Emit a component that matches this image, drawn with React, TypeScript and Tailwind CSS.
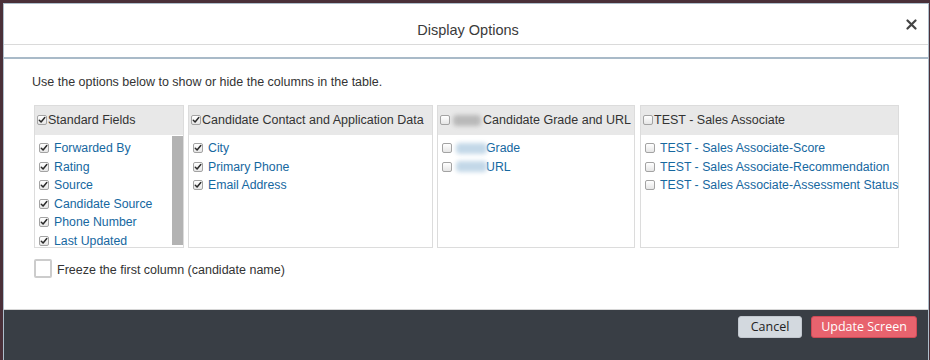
import React from "react";

const font = { fontFamily: '"Liberation Sans", Arial, sans-serif' };

function Box({ checked, size = 10 }: { checked?: boolean; size?: number }) {
  return (
    <span
      className="inline-flex shrink-0 items-center justify-center rounded-[2px] border border-[#a3a3a3] bg-gradient-to-b from-white to-[#e6e6e6]"
      style={{ width: size, height: size }}
    >
      {checked && (
        <svg width="8" height="8" viewBox="0 0 8 8">
          <path d="M1.3 4.2 L3.1 6 L6.8 1.6" fill="none" stroke="#2a2a2a" strokeWidth="1.5" strokeLinecap="round" strokeLinejoin="round" />
        </svg>
      )}
    </span>
  );
}

function Item({ label, checked, blurred }: { label: string; checked?: boolean; blurred?: boolean }) {
  return (
    <div className="flex items-center h-[18.5px] text-[12.3px]">
      <Box checked={checked} />
      {blurred ? (
        <span className="flex items-center ml-[4px]">
          <span className="w-[31px] h-[11px] bg-[#c3d8e8] blur-[2px] rounded-sm" />
          <span className="text-[#16689f] -ml-[1px]">{label}</span>
        </span>
      ) : (
        <span className="ml-[5px] text-[#16689f] whitespace-nowrap">{label}</span>
      )}
    </div>
  );
}

function Panel({
  width,
  title,
  checked,
  items,
  scroll,
  blurHeader,
  blurredItems,
}: {
  width: string;
  title: string;
  checked?: boolean;
  items: string[];
  scroll?: boolean;
  blurHeader?: boolean;
  blurredItems?: boolean;
}) {
  return (
    <div className={`${width} h-[143px] border border-[#dcdcdc] flex flex-col bg-white`}>
      <div className="h-[29px] bg-[#e8e8e8] flex items-start pt-[6px] pl-[2px] text-[#333]">
        <div className="flex items-center h-[16px]">
          <Box checked={checked} />
          {blurHeader && <span className="ml-[3px] w-[28px] h-[11px] bg-[#b9b9b9] blur-[2px] rounded-sm" />}
          <span className={`${blurHeader ? "ml-[2px]" : "ml-[1px]"} whitespace-nowrap`}>{title}</span>
        </div>
      </div>
      <div className="flex flex-1 min-h-0">
        <div className="flex-1 pt-[4px] pl-[4px]">
          {items.map((it) => (
            <Item key={it} label={it} checked={checked} blurred={blurredItems} />
          ))}
        </div>
        {scroll && <div className="w-[11px] bg-[#b3b3b3] mt-[1px] mb-[2px]" />}
      </div>
    </div>
  );
}

export default function App() {
  return (
    <div className="w-[930px] h-[360px] bg-[#4a3039] overflow-hidden pt-[3px] pl-[3px] text-[12.5px]" style={font}>
      <div className="w-[926px] h-[357px] bg-white border-t border-l border-r border-[#aebfcc] flex flex-col">
        <div className="h-[41px] border-b border-[#dadada] relative flex items-center justify-center">
          <span className="text-[14.5px] text-[#3a3a3a] mt-[13px] ml-[4px]">Display Options</span>
          <svg className="absolute right-[11px] top-[15px]" width="11" height="11" viewBox="0 0 11 11">
            <path d="M1.5 1.5 L9.5 9.5 M9.5 1.5 L1.5 9.5" stroke="#444" strokeWidth="2.2" strokeLinecap="round" />
          </svg>
        </div>
        <div className="h-[12px] bg-white" />
        <div className="h-[2px] bg-[#a9bac8]" />
        <div className="flex-1 pl-[28px] pt-[15px] text-[#333] flex flex-col">
          <div className="leading-[16px]">Use the options below to show or hide the columns in the table.</div>
          <div className="flex mt-[15px] ml-[2px]">
            <Panel
              width="w-[150px]"
              title="Standard Fields"
              checked
              scroll
              items={["Forwarded By", "Rating", "Source", "Candidate Source", "Phone Number", "Last Updated"]}
            />
            <div className="w-[4px]" />
            <Panel
              width="w-[245px]"
              title="Candidate Contact and Application Data"
              checked
              items={["City", "Primary Phone", "Email Address"]}
            />
            <div className="w-[4px]" />
            <Panel
              width="w-[198px]"
              title="Candidate Grade and URL"
              blurHeader
              blurredItems
              items={["Grade", "URL"]}
            />
            <div className="w-[5px]" />
            <Panel
              width="w-[259px]"
              title="TEST - Sales Associate"
              items={[
                "TEST - Sales Associate-Score",
                "TEST - Sales Associate-Recommendation",
                "TEST - Sales Associate-Assessment Status",
              ]}
            />
          </div>
          <div className="flex items-center mt-[10px] ml-[2px]">
            <span className="w-[18px] h-[19px] border-2 border-[#cccccc] rounded-[2px] bg-white" />
            <span className="ml-[5px] mt-[3px]">Freeze the first column (candidate name)</span>
          </div>
        </div>
        <div className="h-[51px] border-t border-[#d6d6d6] bg-[#393e45] flex justify-end items-start pt-[6px] pr-[11px] gap-[9px]" style={{ fontFamily: '"Open Sans", sans-serif' }}>
          <button className="w-[64px] h-[22px] rounded-[3px] bg-[#d3d9df] border border-[#c1c7ce] text-[12.5px] text-[#222] flex items-center justify-center">
            Cancel
          </button>
          <button className="w-[106px] h-[22px] rounded-[3px] bg-[#e8636e] border border-[#cf4a56] text-[12.5px] text-white flex items-center justify-center">
            Update Screen
          </button>
        </div>
      </div>
    </div>
  );
}
